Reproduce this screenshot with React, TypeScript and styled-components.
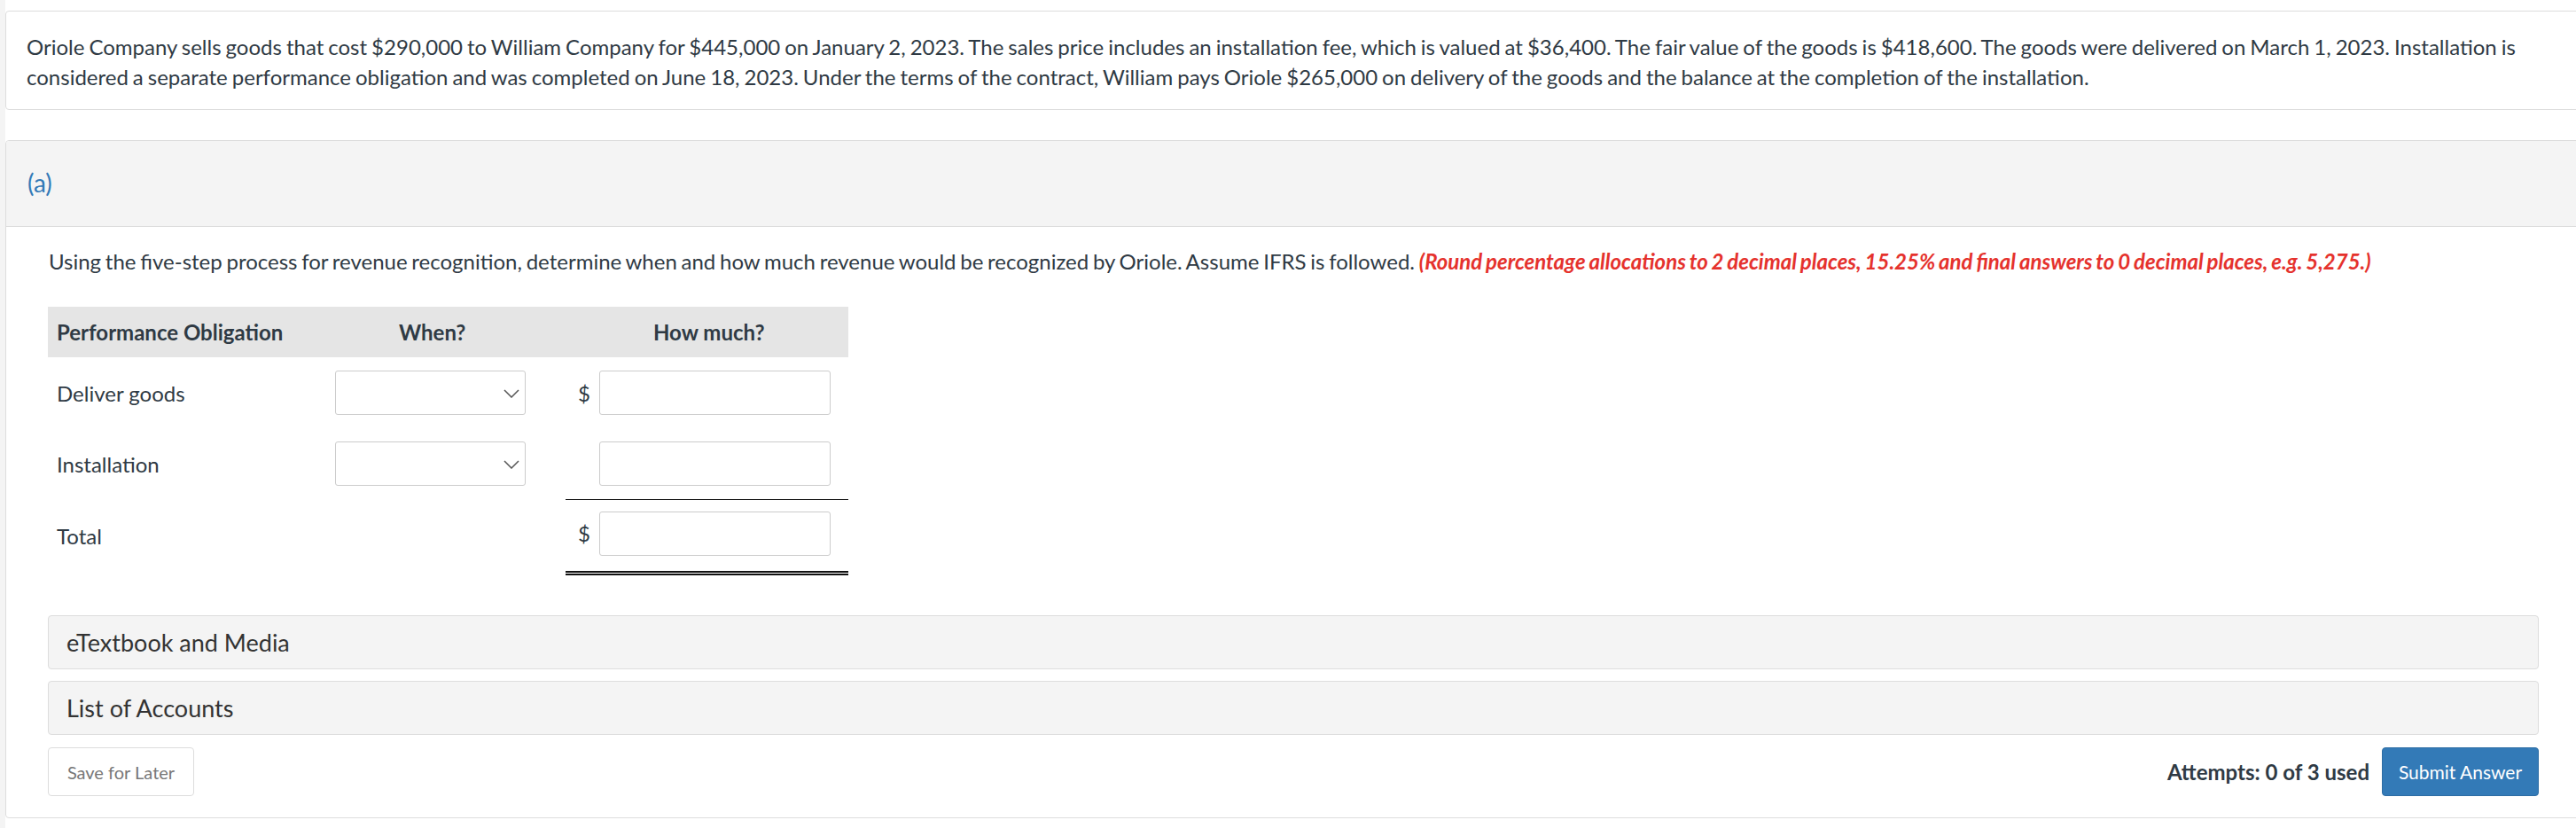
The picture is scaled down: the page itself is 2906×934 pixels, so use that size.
import React from "react";
import styled, { createGlobalStyle } from "styled-components";

const Global = createGlobalStyle`
  html, body {
    margin: 0;
    padding: 0;
    background: #ffffff;
    overflow: hidden;
  }
  body {
    font-family: Lato, "Open Sans", "Liberation Sans", sans-serif;
    color: #2f3a44;
  }
  * { box-sizing: border-box; }
`;

const Page = styled.div`
  width: 100vw;
  height: 934px;
  border-left: 6px solid #f4f4f4;
  padding-top: 12px;
  display: flex;
  flex-direction: column;
  gap: 34px;
  overflow: hidden;
`;

const Card = styled.section`
  width: 100vw;
  flex: none;
  background: #ffffff;
  border: 1px solid #dddddd;
  border-radius: 4px;
`;

const Question = styled.p`
  margin: 0;
  padding: 23px 24px 19px 23px;
  font-size: 24px;
  line-height: 34px;
  word-spacing: -1.15px;
`;

const PartHeader = styled.div`
  background: #f4f4f4;
  border-bottom: 1px solid #dddddd;
  border-radius: 4px 4px 0 0;
  padding: 30px 24px 32px 24px;
  font-size: 28px;
  line-height: 34px;
  color: #337ab7;
`;

const PartBody = styled.div`
  padding: 22px 47px 24px 47px;
  display: flex;
  flex-direction: column;
`;

const Instruction = styled.p`
  margin: 0 0 34px 1px;
  font-size: 24px;
  line-height: 34px;
  word-spacing: -1.4px;
`;

const Red = styled.strong`
  color: #e5322d;
  font-style: italic;
  font-weight: 700;
`;

const Table = styled.div`
  width: 903px;
  display: grid;
  grid-template-columns: 314px 270px 319px;
`;

const HeadCell = styled.div<{ $pad: number }>`
  background: #e5e5e5;
  height: 57px;
  display: flex;
  align-items: center;
  padding-left: ${(p) => p.$pad}px;
  font-size: 24px;
  font-weight: 700;
`;

const Cell = styled.div<{ $rule?: "single" | "double" }>`
  height: ${(p) => (p.$rule === "double" ? 85 : p.$rule === "single" ? 81 : 80)}px;
  display: flex;
  align-items: center;
  padding-bottom: ${(p) => (p.$rule === "double" ? 5 : p.$rule === "single" ? 1 : 0)}px;
  font-size: 24px;
  border-bottom: ${(p) =>
    p.$rule === "double" ? "5px double #111" : p.$rule === "single" ? "1.5px solid #111" : "none"};
`;

const LabelCell = styled(Cell)`
  padding-left: 10px;
`;

const WhenCell = styled(Cell)`
  padding-left: 10px;
`;

const AmountCell = styled(Cell)`
  padding-left: 14px;
`;

const Dollar = styled.span<{ $hidden?: boolean }>`
  width: 24px;
  font-size: 24px;
  visibility: ${(p) => (p.$hidden ? "hidden" : "visible")};
`;

const SelectWrap = styled.div`
  position: relative;
  width: 215px;
  height: 50px;
`;

const Select = styled.select`
  appearance: none;
  width: 100%;
  height: 100%;
  border: 1px solid #cccccc;
  border-radius: 3px;
  background: #ffffff;
  font-family: inherit;
  font-size: 20px;
`;

const Chevron = styled.svg`
  position: absolute;
  right: 7px;
  top: 21px;
  pointer-events: none;
`;

const Input = styled.input`
  width: 261px;
  height: 50px;
  border: 1px solid #cccccc;
  border-radius: 3px;
  background: #ffffff;
  font-family: inherit;
  font-size: 20px;
`;

const Panel = styled.div<{ $top: number }>`
  margin-top: ${(p) => p.$top}px;
  height: 61px;
  background: #f4f4f4;
  border: 1px solid #dddddd;
  border-radius: 4px;
  display: flex;
  align-items: center;
  padding-left: 20px;
  font-size: 27px;
  color: #333333;
`;

const Actions = styled.div`
  margin-top: 14px;
  display: flex;
  align-items: center;
  gap: 14px;
`;

const SaveButton = styled.button`
  width: 165px;
  height: 55px;
  background: #ffffff;
  border: 1px solid #dddddd;
  border-radius: 4px;
  font-family: inherit;
  font-size: 20px;
  color: #777777;
  padding: 0;
`;

const Attempts = styled.span`
  margin-left: auto;
  font-size: 24px;
  font-weight: 700;
  color: #2f3a44;
`;

const SubmitButton = styled.button`
  width: 177px;
  height: 55px;
  background: #337ab7;
  border: 1px solid #2e6da4;
  border-radius: 4px;
  font-family: inherit;
  font-size: 21px;
  color: #ffffff;
  padding: 0;
`;

const Dropdown = () => (
  <SelectWrap>
    <Select defaultValue="">
      <option value=""></option>
    </Select>
    <Chevron width="18" height="10" viewBox="0 0 18 10">
      <path d="M1 1 L9 9 L17 1" fill="none" stroke="#555" strokeWidth="1.5" />
    </Chevron>
  </SelectWrap>
);

export default function App() {
  return (
    <>
      <Global />
      <Page>
        <Card>
          <Question>
            Oriole Company sells goods that cost $290,000 to William Company for $445,000 on January 2, 2023. The
            sales price includes an installation fee, which is valued at $36,400. The fair value of the goods is
            $418,600. The goods were delivered on March 1, 2023. Installation is considered a separate performance
            obligation and was completed on June 18, 2023. Under the terms of the contract, William pays Oriole
            $265,000 on delivery of the goods and the balance at the completion of the installation.
          </Question>
        </Card>
        <Card>
          <PartHeader>(a)</PartHeader>
          <PartBody>
            <Instruction>
              Using the five-step process for revenue recognition, determine when and how much revenue would be
              recognized by Oriole. Assume IFRS is followed.{" "}
              <Red>
                (Round percentage allocations to 2 decimal places, 15.25% and final answers to 0 decimal places, e.g.
                5,275.)
              </Red>
            </Instruction>
            <Table>
              <HeadCell $pad={10}>Performance Obligation</HeadCell>
              <HeadCell $pad={82}>When?</HeadCell>
              <HeadCell $pad={99}>How much?</HeadCell>

              <LabelCell>Deliver goods</LabelCell>
              <WhenCell>
                <Dropdown />
              </WhenCell>
              <AmountCell>
                <Dollar>$</Dollar>
                <Input />
              </AmountCell>

              <LabelCell>Installation</LabelCell>
              <WhenCell>
                <Dropdown />
              </WhenCell>
              <AmountCell $rule="single">
                <Dollar $hidden>$</Dollar>
                <Input />
              </AmountCell>

              <LabelCell>Total</LabelCell>
              <WhenCell />
              <AmountCell $rule="double">
                <Dollar>$</Dollar>
                <Input />
              </AmountCell>
            </Table>
            <Panel $top={45}>eTextbook and Media</Panel>
            <Panel $top={13}>List of Accounts</Panel>
            <Actions>
              <SaveButton>Save for Later</SaveButton>
              <Attempts>Attempts: 0 of 3 used</Attempts>
              <SubmitButton>Submit Answer</SubmitButton>
            </Actions>
          </PartBody>
        </Card>
      </Page>
    </>
  );
}
